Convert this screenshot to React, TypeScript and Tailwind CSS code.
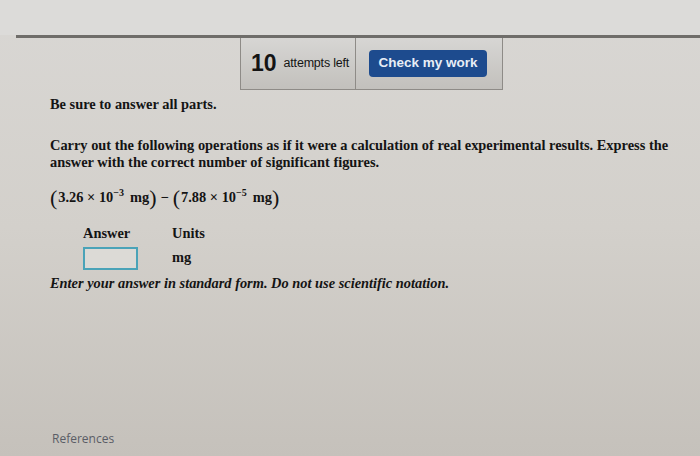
export default function App() {
  const serif = { fontFamily: '"Liberation Serif", "Times New Roman", serif' };
  return (
    <div className="relative h-[456px] w-[700px] overflow-hidden bg-linear-to-b from-[#d9d7d4] via-[#d3d0cb] to-[#c5c1bb] text-[#141414]">
      {/* top strip */}
      <div className="h-[35px] bg-[#dcdbd9]" />
      <div className="ml-[16px] h-[3px] bg-[#6f6d6a]" />

      {/* attempts bar */}
      <div className="ml-[240px] flex h-[52px] w-[263px] border border-t-0 border-[#8e8b87] bg-linear-to-b from-[#d7d6d4] to-[#c2c0bc]">
        <div className="flex w-[115px] items-center gap-[7px] border-r border-[#8e8b87] pl-[10px]" style={{ fontFamily: '"Liberation Sans", Arial, sans-serif' }}>
          <span className="text-[23px] font-bold leading-none">10</span>
          <span className="text-[12.5px] tracking-[-0.2px]">attempts left</span>
        </div>
        <div className="flex flex-1 items-center pl-[13px]">
          <div className="flex h-[27px] w-[118px] items-center justify-center rounded-[4px] bg-[#1d4b8e] text-[13.5px] font-bold text-[#e8eef6]" style={{ fontFamily: '"Liberation Sans", Arial, sans-serif' }}>
            Check my work
          </div>
        </div>
      </div>

      <div className="ml-[50px] mr-[20px]" style={serif}>
        <p className="mt-[4px] text-[14.4px] font-bold">Be sure to answer all parts.</p>
        <p className="mt-[21px] text-[14.4px] font-bold leading-[17px]">
          Carry out the following operations as if it were a calculation of real experimental results. Express the answer with the correct number of significant figures.
        </p>
        <p className="mt-[13px] flex h-[28px] items-center text-[14.4px] font-bold">
          <span className="text-[22px] font-normal leading-none">(</span>
          <span className="ml-[1px]">3.26 × 10</span>
          <sup className="-top-[5px] text-[10px]">−3</sup>
          <span className="ml-[6px]">mg</span>
          <span className="text-[22px] font-normal leading-none">)</span>
          <span className="mx-[4px]">−</span>
          <span className="text-[22px] font-normal leading-none">(</span>
          <span className="ml-[1px]">7.88 × 10</span>
          <sup className="-top-[5px] text-[10px]">−5</sup>
          <span className="ml-[6px]">mg</span>
          <span className="text-[22px] font-normal leading-none">)</span>
        </p>

        <div className="mt-[13px] ml-[33px] flex text-[14.4px] font-bold">
          <div className="w-[89px]">
            <div className="leading-[17px]">Answer</div>
            <div className="mt-[5px] h-[23px] w-[55px] border-2 border-[#4aa3b8] bg-[#dcdad6]" />
          </div>
          <div>
            <div className="leading-[17px]">Units</div>
            <div className="mt-[7px] leading-[17px]">mg</div>
          </div>
        </div>
        <p className="mt-[3px] text-[14.4px] font-bold italic">
          Enter your answer in standard form. Do not use scientific notation.
        </p>
      </div>

      <div className="absolute left-[52px] top-[430px] text-[12px] text-[#5a5d66]" style={{ fontFamily: '"Open Sans", "Liberation Sans", sans-serif' }}>
        References
      </div>
    </div>
  );
}
